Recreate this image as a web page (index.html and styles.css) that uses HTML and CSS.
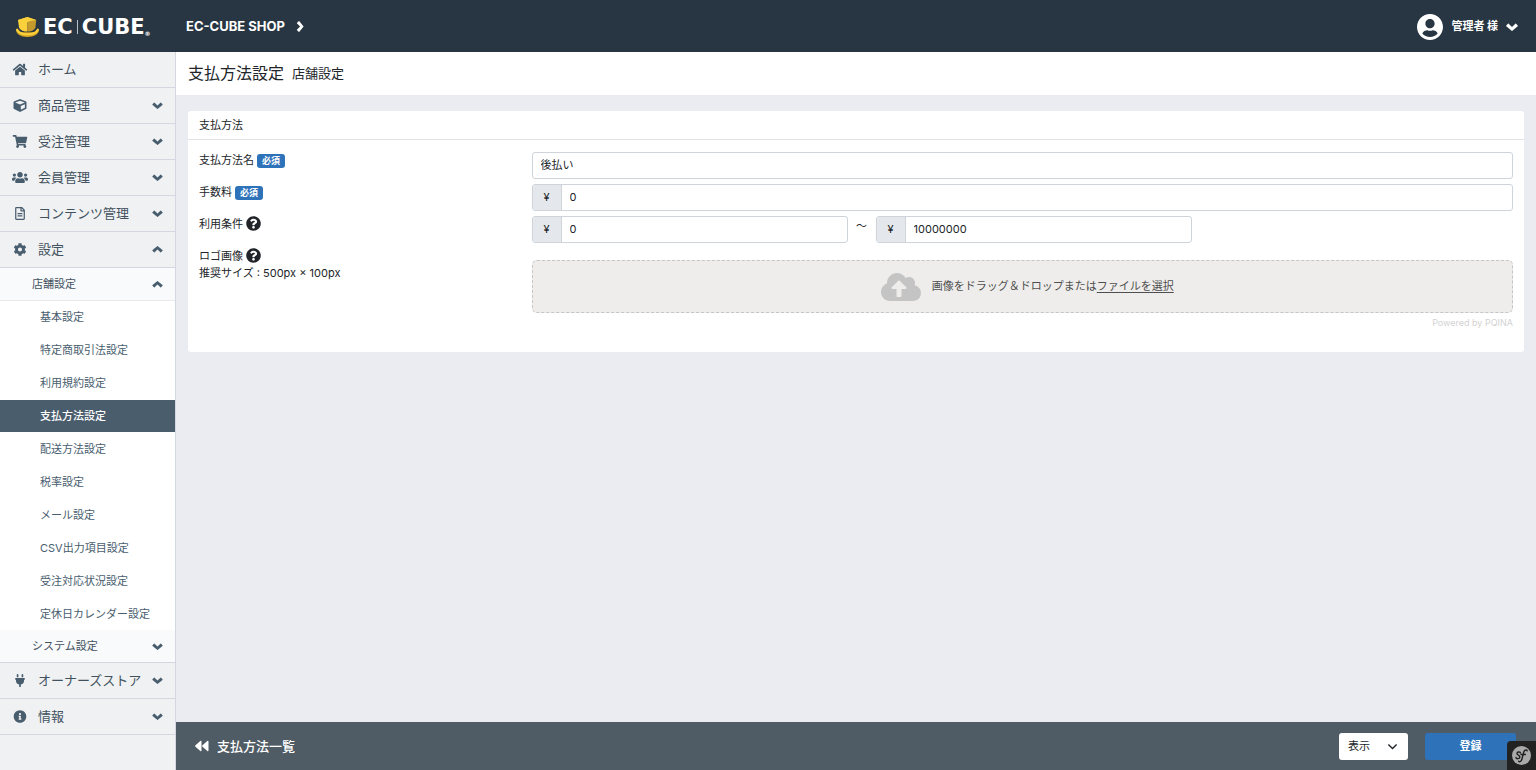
FILE: index.html
```html
<!DOCTYPE html>
<html lang="ja">
<head>
<meta charset="utf-8">
<title>支払方法設定 店舗設定 - EC-CUBE SHOP</title>
<link rel="stylesheet" href="styles.css">
</head>
<body>
<svg class="sprite" aria-hidden="true">
  <symbol id="down" viewBox="0 0 12 8"><path d="M.3 2.500L1.900.8q.4-.4.8 0L6 4.100 9.300.8q.4-.4.8 0l1.600 1.700q.4.400 0 .8L6.400 7.700q-.4.400-.8 0L.3 3.300q-.4-.4 0-.8z"/></symbol>
  <symbol id="up" viewBox="0 0 12 8"><path d="M.3 5.500l1.600 1.700q.4.400.8 0L6 3.900l3.300 3.300q.4.400.8 0l1.600-1.700q.4-.4 0-.8L6.400.3q-.4-.4-.8 0L.3 4.700q-.4.400 0 .8z"/></symbol>
  <symbol id="right" viewBox="0 0 8 12"><path d="M2.500.3L.8 1.900q-.4.400 0 .8L4.100 6 .8 9.300q-.4.400 0 .8l1.700 1.600q.4.400.8 0l4.400-5.300q.4-.4 0-.8L3.300.3q-.4-.4-.8 0z"/></symbol>
  <symbol id="help" viewBox="0 0 512 512"><path d="M504 256c0 137-111 248-248 248S8 393 8 256 119 8 256 8s248 111 248 248zM262.700 90c-54.500 0-89.300 23-116.500 63.800-3.500 5.300-2.400 12.400 2.700 16.300l34.700 26.300c5.200 3.900 12.600 3 16.700-2.100 17.900-22.700 30.100-35.800 57.300-35.800 20.400 0 45.700 13.100 45.700 33 0 15-12.400 22.700-32.500 34C247.100 238.500 216 255 216 296v4c0 6.600 5.400 12 12 12h56c6.600 0 12-5.400 12-12v-1.300c0-28.800 84.200-30 84.200-108 0-58.700-60.900-100.700-117.500-100.700zM256 338c-25.400 0-46 20.600-46 46s20.600 46 46 46 46-20.600 46-46-20.600-46-46-46z"/></symbol>
</svg>

<header class="topbar">
  <a class="logo" href="#" aria-label="EC-CUBE">
    <svg class="logo-mark" viewBox="0 0 24 21" aria-hidden="true">
      <path fill="#d9a722" d="M0 13.500C0 18 5 21 12 21s12-3 12-7.500l-1-1.300L20 16H4l-3-3.800z"/>
      <path fill="#fbd13b" d="M0 13.300c0-.7.700-1.200 1.700-1.300C3 15.300 7 17 12 17s9-1.700 10.300-5c1 .1 1.700.6 1.700 1.300C23 17 18 19.200 12 19.200S1 17 0 13.300z"/>
      <path fill="#fbd13b" d="M2 3.200L12 0v15.300c-4 0-7.300-1.300-8.800-3.800z"/>
      <path fill="#c49a2c" d="M12 0l9.200 3.200-1 8.300c-1.500 2.500-4.200 3.800-8.200 3.800z"/>
      <path fill="#fbd13b" d="M2 3.200L12 0l9.200 3.200-7.700 1.200L12 5.500z"/>
    </svg>
    <span class="wordmark"><span>EC</span><span class="bar"></span><span>CUBE</span><span class="reg">®</span></span>
  </a>
  <a class="shop" href="#">EC-CUBE SHOP
    <svg class="right" aria-hidden="true"><use href="#right"/></svg>
  </a>
  <button class="user" type="button">
    <svg class="avatar" viewBox="0 8 496 496" aria-hidden="true"><path d="M248 8C111 8 0 119 0 256s111 248 248 248 248-111 248-248S385 8 248 8zm0 96c48.600 0 88 39.400 88 88s-39.400 88-88 88-88-39.400-88-88 39.400-88 88-88zm0 344c-58.700 0-111.300-26.600-146.500-68.200 18.800-35.400 55.600-59.800 98.500-59.800 2.400 0 4.800.4 7.100 1.100 13 4.200 26.600 6.900 40.900 6.900 14.300 0 28-2.700 40.900-6.900 2.300-.7 4.700-1.100 7.100-1.100 42.900 0 79.700 24.400 98.500 59.800C359.300 421.400 306.700 448 248 448z"/></svg>
    <span>管理者 様</span>
    <svg class="chev" aria-hidden="true"><use href="#down"/></svg>
  </button>
</header>

<div class="shell">
  <nav class="sidebar">
    <a class="item" href="#"><svg class="icon" viewBox="0 0 576 512" aria-hidden="true"><path d="M280.400 148.300L96 300.100V464a16 16 0 0 0 16 16l112.100-.3a16 16 0 0 0 15.900-16V368a16 16 0 0 1 16-16h64a16 16 0 0 1 16 16v95.600a16 16 0 0 0 16 16.100L464 480a16 16 0 0 0 16-16V300L295.700 148.300a12.200 12.200 0 0 0-15.300 0zM571.600 251.500L488 182.600V44.100a12 12 0 0 0-12-12h-56a12 12 0 0 0-12 12v72.600L318.500 43a48 48 0 0 0-61 0L4.300 251.500a12 12 0 0 0-1.600 16.900l25.500 31A12 12 0 0 0 45.200 301l235.200-193.700a12.200 12.200 0 0 1 15.300 0L530.900 301a12 12 0 0 0 16.900-1.600l25.500-31a12 12 0 0 0-1.700-16.900z"/></svg><span>ホーム</span></a>
    <a class="item" href="#"><svg class="icon" viewBox="0 0 512 512" aria-hidden="true"><path d="M239.100 6.300l-208 78c-18.700 7-31.100 25-31.100 45v225.100c0 18.200 10.300 34.800 26.500 42.900l208 104c13.500 6.800 29.400 6.800 42.900 0l208-104c16.300-8.100 26.500-24.800 26.500-42.900V129.300c0-20-12.400-37.900-31.100-44.900l-208-78C262 2.200 250 2.200 239.100 6.300zM256 68.400l192 72v1.100l-192 78-192-78v-1.100l192-72zm32 356V275.500l160-65v133.900l-160 80z"/></svg><span>商品管理</span><svg class="chev" aria-hidden="true"><use href="#down"/></svg></a>
    <a class="item" href="#"><svg class="icon" viewBox="0 0 576 512" aria-hidden="true"><path d="M528.100 301.300l47.300-208C578.800 78.300 567.400 64 552 64H159.200l-9.200-44.800C147.800 8 137.900 0 126.500 0H24C10.700 0 0 10.700 0 24v16c0 13.300 10.700 24 24 24h69.900l70.200 343.400C147.300 417.100 136 435.200 136 456c0 30.900 25.100 56 56 56s56-25.100 56-56c0-15.700-6.400-29.800-16.800-40h209.600C430.400 426.200 424 440.300 424 456c0 30.900 25.100 56 56 56s56-25.100 56-56c0-22.200-12.900-41.300-31.600-50.400l5.500-24.300c3.400-15-8-29.300-23.400-29.300H218.100l-6.500-32h293.100c11.200 0 20.900-7.800 23.400-18.700z"/></svg><span>受注管理</span><svg class="chev" aria-hidden="true"><use href="#down"/></svg></a>
    <a class="item" href="#"><svg class="icon" viewBox="0 0 640 512" aria-hidden="true"><path d="M96 224c35.300 0 64-28.700 64-64s-28.700-64-64-64-64 28.700-64 64 28.700 64 64 64zm448 0c35.300 0 64-28.700 64-64s-28.700-64-64-64-64 28.700-64 64 28.700 64 64 64zm32 32h-64c-17.600 0-33.500 7.100-45.100 18.600 40.300 22.100 68.900 62 75.100 109.400h66c17.700 0 32-14.300 32-32v-32c0-35.300-28.700-64-64-64zm-256 0c61.900 0 112-50.100 112-112S381.900 32 320 32 208 82.100 208 144s50.100 112 112 112zm76.800 32h-8.300c-20.800 10-43.900 16-68.500 16s-47.600-6-68.500-16h-8.300C179.600 288 128 339.600 128 403.200V432c0 26.500 21.500 48 48 48h288c26.500 0 48-21.500 48-48v-28.800c0-63.600-51.600-115.200-115.200-115.200zm-223.700-13.400C161.500 263.100 145.600 256 128 256H64c-35.300 0-64 28.700-64 64v32c0 17.700 14.300 32 32 32h65.900c6.300-47.400 34.900-87.300 75.200-109.400z"/></svg><span>会員管理</span><svg class="chev" aria-hidden="true"><use href="#down"/></svg></a>
    <a class="item" href="#"><svg class="icon" viewBox="0 0 384 512" aria-hidden="true"><path d="M288 248v28c0 6.600-5.400 12-12 12H108c-6.600 0-12-5.400-12-12v-28c0-6.600 5.400-12 12-12h168c6.600 0 12 5.400 12 12zm-12 72H108c-6.600 0-12 5.400-12 12v28c0 6.600 5.400 12 12 12h168c6.600 0 12-5.400 12-12v-28c0-6.600-5.400-12-12-12zm108-188.100V464c0 26.500-21.500 48-48 48H48c-26.500 0-48-21.500-48-48V48C0 21.500 21.500 0 48 0h204.100C264.800 0 277 5.100 286 14.100L369.900 98c9 8.900 14.100 21.200 14.100 33.900zm-128-80V128h76.100L256 51.900zM336 464V176H232c-13.300 0-24-10.700-24-24V48H48v416h288z"/></svg><span>コンテンツ管理</span><svg class="chev" aria-hidden="true"><use href="#down"/></svg></a>
    <a class="item" href="#"><svg class="icon" viewBox="0 0 512 512" aria-hidden="true"><path d="M487.400 315.700l-42.600-24.600c4.300-23.200 4.300-47 0-70.200l42.600-24.600c4.900-2.800 7.100-8.600 5.500-14-11.100-35.600-30-67.800-54.700-94.600-3.800-4.100-10-5.100-14.800-2.300L380.800 110c-17.900-15.400-38.500-27.300-60.800-35.100V25.800c0-5.600-3.900-10.500-9.400-11.700-36.700-8.200-74.300-7.800-109.200 0-5.500 1.200-9.400 6.100-9.400 11.700V75c-22.200 7.900-42.800 19.800-60.800 35.100L88.700 85.500c-4.900-2.800-11-1.900-14.800 2.300-24.700 26.700-43.600 58.900-54.700 94.600-1.700 5.400.6 11.200 5.500 14L67.300 221c-4.300 23.200-4.300 47 0 70.200l-42.600 24.600c-4.900 2.800-7.100 8.600-5.500 14 11.100 35.600 30 67.800 54.700 94.600 3.800 4.100 10 5.100 14.800 2.300l42.600-24.600c17.900 15.400 38.500 27.300 60.800 35.100v49.200c0 5.600 3.900 10.500 9.400 11.700 36.700 8.200 74.300 7.800 109.200 0 5.500-1.200 9.400-6.100 9.400-11.700v-49.200c22.200-7.900 42.800-19.800 60.800-35.100l42.600 24.600c4.900 2.800 11 1.900 14.800-2.300 24.700-26.700 43.600-58.900 54.700-94.600 1.500-5.500-.7-11.300-5.600-14.100zM256 336c-44.100 0-80-35.900-80-80s35.900-80 80-80 80 35.900 80 80-35.900 80-80 80z"/></svg><span>設定</span><svg class="chev" aria-hidden="true"><use href="#up"/></svg></a>
    <a class="subhead open" href="#"><span>店舗設定</span><svg class="chev" aria-hidden="true"><use href="#up"/></svg></a>
    <ul class="sublist">
      <li><a href="#">基本設定</a></li>
      <li><a href="#">特定商取引法設定</a></li>
      <li><a href="#">利用規約設定</a></li>
      <li><a class="active" href="#">支払方法設定</a></li>
      <li><a href="#">配送方法設定</a></li>
      <li><a href="#">税率設定</a></li>
      <li><a href="#">メール設定</a></li>
      <li><a href="#">CSV出力項目設定</a></li>
      <li><a href="#">受注対応状況設定</a></li>
      <li><a href="#">定休日カレンダー設定</a></li>
    </ul>
    <a class="subhead" href="#"><span>システム設定</span><svg class="chev" aria-hidden="true"><use href="#down"/></svg></a>
    <a class="item" href="#"><svg class="icon" viewBox="0 0 384 512" aria-hidden="true"><path d="M320 32a32 32 0 0 0-64 0v96h64zm48 128H16a16 16 0 0 0-16 16v32a16 16 0 0 0 16 16h16v32a160.100 160.100 0 0 0 128 156.800V512h64v-99.200A160.100 160.100 0 0 0 352 256v-32h16a16 16 0 0 0 16-16v-32a16 16 0 0 0-16-16zM128 32a32 32 0 0 0-64 0v96h64z"/></svg><span>オーナーズストア</span><svg class="chev" aria-hidden="true"><use href="#down"/></svg></a>
    <a class="item" href="#"><svg class="icon" viewBox="0 0 512 512" aria-hidden="true"><path d="M256 8C119 8 8 119.100 8 256c0 137 111 248 248 248s248-111 248-248C504 119.100 393 8 256 8zm0 110c23.200 0 42 18.800 42 42s-18.800 42-42 42-42-18.800-42-42 18.800-42 42-42zm56 254c0 6.600-5.400 12-12 12h-88c-6.600 0-12-5.400-12-12v-24c0-6.600 5.400-12 12-12h12v-64h-12c-6.600 0-12-5.400-12-12v-24c0-6.600 5.400-12 12-12h64c6.600 0 12 5.400 12 12v100h12c6.600 0 12 5.400 12 12z"/></svg><span>情報</span><svg class="chev" aria-hidden="true"><use href="#down"/></svg></a>
  </nav>

  <form class="main">
    <div class="title"><h1>支払方法設定</h1><span>店舗設定</span></div>
    <div class="content">
      <section class="card">
        <h2>支払方法</h2>
        <div class="fields">
          <label class="label" for="name">支払方法名 <span class="badge">必須</span></label>
          <div class="group"><input id="name" type="text" value="後払い"></div>

          <label class="label" for="fee">手数料 <span class="badge">必須</span></label>
          <div class="group"><span class="yen">¥</span><input id="fee" type="text" value="0"></div>

          <label class="label" for="min">利用条件 <svg class="help" aria-hidden="true"><use href="#help"/></svg></label>
          <div class="range">
            <div class="group"><span class="yen">¥</span><input id="min" type="text" value="0"></div>
            <span class="tilde">〜</span>
            <div class="group"><span class="yen">¥</span><input type="text" value="10000000" aria-label="利用条件 上限"></div>
          </div>

          <div class="label"><span>ロゴ画像 <svg class="help" aria-hidden="true"><use href="#help"/></svg></span><br>推奨サイズ : 500px × 100px</div>
          <div class="upload">
            <div class="drop">
              <svg class="cloud" viewBox="0 32 640 448" aria-hidden="true"><path d="M537.600 226.600c4.100-10.700 6.400-22.400 6.400-34.600 0-53-43-96-96-96-19.700 0-38.100 6-53.300 16.200C367 64.200 315.300 32 256 32c-88.400 0-160 71.600-160 160 0 2.700.1 5.400.2 8.100C40.200 219.800 0 273.200 0 336c0 79.500 64.500 144 144 144h368c70.700 0 128-57.300 128-128 0-61.900-44-113.600-102.400-125.400zM393.400 288H328v112c0 8.800-7.200 16-16 16h-48c-8.800 0-16-7.200-16-16V288h-65.400c-14.300 0-21.400-17.200-11.300-27.300l105.400-105.400c6.200-6.200 16.400-6.200 22.600 0l105.400 105.400c10.100 10.100 2.900 27.300-11.300 27.300z"/></svg>
              <span>画像をドラッグ＆ドロップまたは<a href="#">ファイルを選択</a></span>
            </div>
            <a class="credit" href="#">Powered by PQINA</a>
          </div>
        </div>
      </section>
    </div>
    <footer class="actions">
      <a class="back" href="#"><svg viewBox="0 0 14 12" aria-hidden="true"><path d="M6.500 1.500v9c0 .8-.6 1-1.200.6L.5 6.700a.9.900 0 0 1 0-1.400L5.300.9c.6-.4 1.200-.2 1.200.6zM13.500 1.500v9c0 .8-.6 1-1.200.6L7.500 6.700a.9.900 0 0 1 0-1.400L12.300.9c.6-.4 1.200-.2 1.200.6z"/></svg><span>支払方法一覧</span></a>
      <span class="select"><select aria-label="表示状態"><option>表示</option><option>非表示</option></select><svg viewBox="0 0 16 16" aria-hidden="true"><path d="M2 5l6 6 6-6"/></svg></span>
      <button class="submit" type="submit">登録</button>
    </footer>
  </form>
</div>

<button class="debug" type="button" aria-label="Symfony">
  <svg viewBox="0 0 20 20" aria-hidden="true"><circle cx="10" cy="10" r="10" fill="#aaa"/><path fill="none" stroke="#222" stroke-width="1.500" stroke-linecap="round" d="M8.800 7.300C8.800 5.900 5.300 5.900 5.200 7.800c-.1 1.900 3.300 1.700 3.100 3.900-.2 2.100-4 2.100-4.100.4M16 5.100c-.3-1.300-2.700-1.600-3.700 1.500L10.400 14c-.6 2.300-2.300 3.200-3.400 2M9.500 8.900h4.600"/></svg>
</button>
</body>
</html>
```
FILE: styles.css
```css
* { box-sizing: border-box; }

body {
  margin: 0;
  min-height: 100vh;
  display: flex;
  flex-direction: column;
  font: 11px/17px Inter, "Noto Sans CJK JP", sans-serif;
  color: #212529;
}

a { color: inherit; text-decoration: none; }
button, input, select { font: inherit; color: inherit; }
svg { fill: currentColor; flex: none; }
.sprite { display: none; }

.topbar {
  display: flex;
  align-items: center;
  height: 52px;
  padding: 1px 16px 0;
  background: #273642;
  color: #fff;
}
.logo { display: flex; align-items: center; gap: 4px; width: 170px; }
.logo-mark { width: 23px; height: 20px; }
.wordmark {
  display: flex;
  align-items: center;
  font: bold 21px/20px "DejaVu Sans", sans-serif;
}
.bar { width: 1px; height: 14px; margin: 0 4px; background: #b9c0c6; }
.reg { align-self: flex-end; font-size: 6px; line-height: 6px; }
.shop {
  display: flex;
  align-items: center;
  gap: 11px;
  font-size: 13px;
  font-weight: 700;
}
.chev { width: 11px; height: 7px; }
.right { width: 8px; height: 11px; }
.user {
  display: flex;
  align-items: center;
  gap: 8px;
  margin-left: auto;
  padding: 0;
  border: 0;
  background: none;
  font-weight: 700;
}
.avatar { width: 26px; height: 26px; }
.user .chev { width: 12px; height: 8px; margin-right: 2px; }

.shell { flex: 1; display: flex; }

.sidebar {
  flex: none;
  width: 176px;
  border-right: 1px solid #d3d7df;
  background: #f0f1f3;
  color: #485d6e;
}
.item, .subhead {
  display: flex;
  align-items: center;
  padding: 0 12px;
  border-bottom: 1px solid #d3d7df;
}
.item { gap: 10px; font-size: 13px; line-height: 35px; }
.item span, .subhead span { color: #42515e; }
.icon { width: 16px; height: 13px; }
.sidebar .chev { margin-left: auto; }
.subhead { padding-left: 32px; background: #f9fafb; line-height: 32px; }
.subhead.open { border-color: #e8eaee; }
.sublist {
  display: grid;
  gap: 1px;
  margin: 0;
  padding: 0;
  list-style: none;
  background: #fff;
}
.sublist a { display: block; padding-left: 40px; line-height: 32px; }
.sublist .active { background: #4a5d6d; color: #fff; font-weight: 500; }

.main {
  flex: 1;
  min-width: 0;
  display: flex;
  flex-direction: column;
  background: #ebecf1;
}
.title {
  display: flex;
  align-items: center;
  gap: 8px;
  padding: 9px 12px 10px;
  background: #fff;
  font-size: 13px;
}
h1 { margin: 0; font-size: 16px; line-height: 24px; font-weight: 400; }
.content { flex: 1; padding: 16px 12px; }
.card { border-radius: 3px; background: #fff; }
h2 {
  margin: 0;
  padding: 6px 11px 5px;
  border-bottom: 1px solid #e0e2e5;
  font-size: 11px;
  font-weight: 400;
}
.fields {
  display: grid;
  grid-template-columns: calc(25% + 4px) 1fr;
  row-gap: 5px;
  padding: 12px 11px 21px;
}
.badge {
  display: inline-block;
  padding: 0 5px;
  border-radius: 3px;
  background: #2e72ba;
  color: #fff;
  font-size: 9px;
  line-height: 14px;
  font-weight: 700;
}
.help { width: 15px; height: 15px; vertical-align: -3px; }
.group {
  display: flex;
  height: 27px;
  border: 1px solid #ced4da;
  border-radius: 3px;
  overflow: hidden;
  background: #fff;
}
.group input {
  flex: 1;
  min-width: 0;
  padding: 0 8px;
  border: 0;
  background: none;
  outline: 0;
}
.yen {
  width: 29px;
  border-right: 1px solid #ced4da;
  background: #e4e8ec;
  line-height: 25px;
  text-align: center;
}
.range { display: flex; }
.range .group { width: calc(32% + 2px); }
.tilde { width: 28px; line-height: 20px; text-align: center; }
.upload { display: flex; flex-direction: column; padding-top: 12px; }
.drop {
  display: flex;
  align-items: center;
  justify-content: center;
  gap: 11px;
  height: 53px;
  padding-left: 10px;
  border: 1px dashed #c5c5c5;
  border-radius: 5px;
  background: #eeedeb;
  color: #4f4f4f;
}
.drop a { text-decoration: underline; text-underline-offset: 2px; }
.cloud { width: 40px; height: 28px; color: #c4c4c4; }
.credit {
  align-self: flex-end;
  padding-top: 2px;
  color: #d3d3d3;
  font-size: 9px;
  line-height: 16px;
}

.actions {
  display: flex;
  align-items: center;
  height: 48px;
  padding: 0 20px 0 19px;
  background: #505c65;
  color: #fff;
}
.back {
  display: flex;
  align-items: center;
  gap: 8px;
  margin-right: auto;
  font-size: 13px;
  font-weight: 500;
}
.back svg { width: 14px; height: 12px; }
.select { display: grid; align-items: center; margin-right: 17px; color: #212529; }
.select select {
  grid-area: 1 / 1;
  appearance: none;
  width: 69px;
  height: 27px;
  padding: 0 9px;
  border: 0;
  border-radius: 3px;
  background: #fff;
}
.select svg {
  grid-area: 1 / 1;
  justify-self: end;
  width: 11px;
  height: 11px;
  margin-right: 10px;
  fill: none;
  stroke: currentColor;
  stroke-width: 2;
  pointer-events: none;
}
.submit {
  width: 91px;
  height: 27px;
  border: 0;
  border-radius: 3px;
  background: #2e72ba;
  font-weight: 700;
}

.debug {
  position: fixed;
  right: 0;
  bottom: 0;
  display: grid;
  place-items: center;
  width: 29px;
  height: 29px;
  padding: 0;
  border: 0;
  border-radius: 4px 0 0 0;
  background: #222;
}
.debug svg { width: 19px; height: 19px; }
```
